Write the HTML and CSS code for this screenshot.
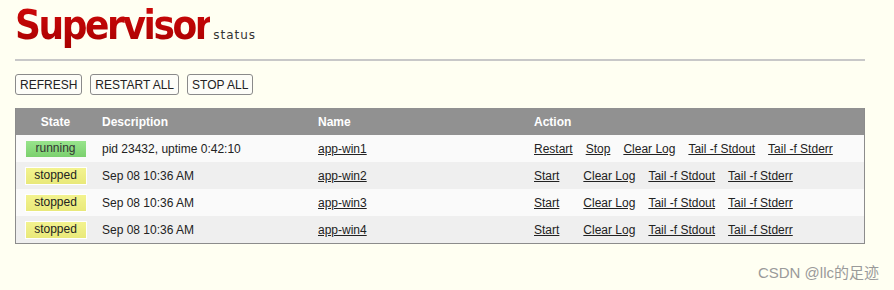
FILE: index.html
```html
<!DOCTYPE html>
<html>
<head>
  <meta charset="utf-8">
  <title>Supervisor Status</title>
  <link rel="stylesheet" href="styles.css">
</head>
<body>
  <div class="header">
    <h1 class="logo">Supervisor</h1>
    <span class="sub">status</span>
  </div>
  <hr class="rule">
  <div class="actions">
    <button class="btn">REFRESH</button>
    <button class="btn">RESTART ALL</button>
    <button class="btn">STOP ALL</button>
  </div>
  <table class="procs">
    <thead>
      <tr>
        <th class="state">State</th>
        <th>Description</th>
        <th>Name</th>
        <th>Action</th>
      </tr>
    </thead>
    <tbody>
      <tr>
        <td class="state"><span class="status running">running</span></td>
        <td>pid 23432, uptime 0:42:10</td>
        <td><a href="#">app-win1</a></td>
        <td>
          <ul class="links">
            <li><a href="#">Restart</a></li>
            <li><a href="#">Stop</a></li>
            <li><a href="#">Clear Log</a></li>
            <li><a href="#">Tail -f Stdout</a></li>
            <li><a href="#">Tail -f Stderr</a></li>
          </ul>
        </td>
      </tr>
      <tr class="shade">
        <td class="state"><span class="status stopped">stopped</span></td>
        <td>Sep 08 10:36 AM</td>
        <td><a href="#">app-win2</a></td>
        <td>
          <ul class="links">
            <li><a href="#">Start</a></li>
            <li></li>
            <li><a href="#">Clear Log</a></li>
            <li><a href="#">Tail -f Stdout</a></li>
            <li><a href="#">Tail -f Stderr</a></li>
          </ul>
        </td>
      </tr>
      <tr>
        <td class="state"><span class="status stopped">stopped</span></td>
        <td>Sep 08 10:36 AM</td>
        <td><a href="#">app-win3</a></td>
        <td>
          <ul class="links">
            <li><a href="#">Start</a></li>
            <li></li>
            <li><a href="#">Clear Log</a></li>
            <li><a href="#">Tail -f Stdout</a></li>
            <li><a href="#">Tail -f Stderr</a></li>
          </ul>
        </td>
      </tr>
      <tr class="shade">
        <td class="state"><span class="status stopped">stopped</span></td>
        <td>Sep 08 10:36 AM</td>
        <td><a href="#">app-win4</a></td>
        <td>
          <ul class="links">
            <li><a href="#">Start</a></li>
            <li></li>
            <li><a href="#">Clear Log</a></li>
            <li><a href="#">Tail -f Stdout</a></li>
            <li><a href="#">Tail -f Stderr</a></li>
          </ul>
        </td>
      </tr>
    </tbody>
  </table>
  <div class="watermark">CSDN @llc的足迹</div>
</body>
</html>
```

FILE: styles.css
```css
body {
  margin: 0;
  padding: 2px 29px 0 15px;
  background: #fffff2;
  color: #222;
  font: 12px "Liberation Sans", Arial, sans-serif;
  position: relative;
  height: 288px;
}
.header {
  display: flex;
  align-items: baseline;
  gap: 3px;
  height: 50px;
}
.logo {
  margin: 0;
  font-family: "DejaVu Sans", sans-serif;
  font-stretch: condensed;
  font-weight: bold;
  font-size: 40px;
  letter-spacing: -2.4px;
  line-height: 46px;
  color: #b80000;
  background: linear-gradient(#d10a0a, #a80000);
  -webkit-background-clip: text;
  background-clip: text;
  -webkit-text-fill-color: transparent;
}
.sub {
  font-family: "DejaVu Sans", sans-serif;
  font-size: 12px;
  letter-spacing: 1px;
  color: #333;
}
.rule {
  margin: 7px 0 0;
  border: 0;
  height: 2px;
  background: #c8c8c8;
}
.actions {
  display: flex;
  gap: 8px;
  margin-top: 13px;
}
.btn {
  height: 21px;
  padding: 0 4px;
  border: 1px solid #8a8a8a;
  border-radius: 3px;
  background: #fdfdf8;
  color: #222;
  font: 12px "Liberation Sans", Arial, sans-serif;
}
.procs {
  margin-top: 13px;
  width: 850px;
  border-collapse: collapse;
  table-layout: fixed;
  border: 1px solid #8c8c8c;
  border-top: 0;
}
.procs th {
  background: #919191;
  color: #fff;
  font-weight: bold;
  text-align: left;
  height: 27px;
  padding: 0 7px;
  width: 202px;
}
.procs th.state {
  width: 79px;
  padding: 0;
  text-align: center;
}
.procs th:last-child {
  width: auto;
}
.procs td {
  height: 27px;
  padding: 0 7px;
  background: #fafafa;
  white-space: nowrap;
}
.procs td.state {
  padding: 0;
  text-align: center;
}
.procs tr.shade td {
  background: #efefef;
}
.procs a {
  color: #222;
}
.status {
  display: inline-block;
  width: 60px;
  height: 16px;
  line-height: 14px;
  vertical-align: middle;
  box-sizing: border-box;
}
.running {
  background: linear-gradient(#98e48c, #7bd06e);
  color: #333;
}
.stopped {
  width: 62px;
  height: 18px;
  line-height: 15px;
  border: 1px solid #fff;
  background: linear-gradient(#f3f38f, #e9e97a);
}
.links {
  display: flex;
  gap: 13px;
  margin: 0;
  padding: 0;
  list-style: none;
}
.links li:empty {
  margin-left: -2px;
}
.watermark {
  position: absolute;
  right: 15px;
  top: 261px;
  font: 15px "Liberation Sans", "Noto Sans CJK SC", sans-serif;
  color: #9a9a9a;
}
```
